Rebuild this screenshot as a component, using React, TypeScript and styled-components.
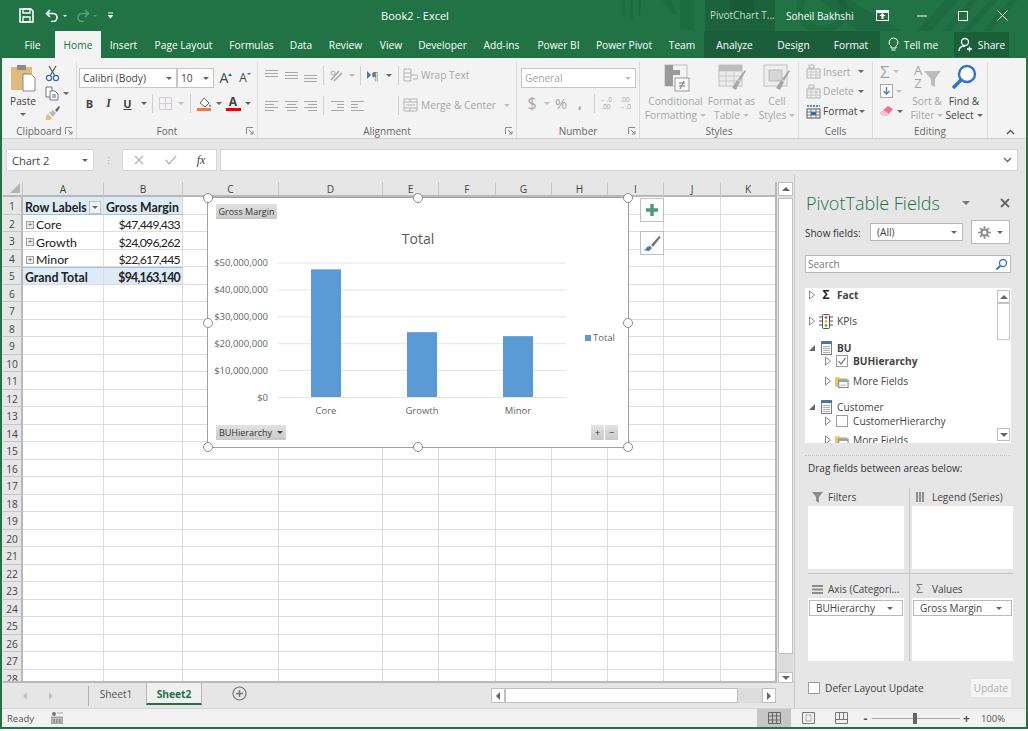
import React from "react";
import styled, { createGlobalStyle } from "styled-components";

const GREEN = "#217346";
const UI_FONT = `"Open Sans", "Noto Sans", sans-serif`;
const CELL_FONT = `Lato, "Open Sans", sans-serif`;

const GlobalStyle = createGlobalStyle`
  html, body { margin: 0; padding: 0; background: #fff; }
  * { box-sizing: border-box; }
  body { font-family: ${UI_FONT}; font-size: 10.2px; color: #444; }
`;

const Window = styled.div`
  width: 1028px;
  height: 729px;
  display: flex;
  flex-direction: column;
  border: 2px solid ${GREEN};
  border-top: 0;
  background: #e6e6e6;
  box-shadow: 0 1px 2px rgba(0, 0, 0, 0.6);
  overflow: hidden;
`;

/* title bar */
const TitleBar = styled.div`
  height: 31px;
  display: flex;
  align-items: center;
  background: ${GREEN};
  color: #fff;
  position: relative;
`;

const Backdrop = styled.svg`
  position: absolute;
  left: 598px;
  top: 0;
`;

const Qat = styled.div`
  width: 354px;
  padding-left: 17px;
  display: flex;
  align-items: center;
  position: relative;
`;

const AppTitle = styled.div`
  width: 118px;
  text-align: center;
  font-size: 11px;
  position: relative;
`;

const TitleGap = styled.div`
  width: 231px;
`;

const ContextTitle = styled.div`
  width: 70px;
  height: 31px;
  line-height: 31px;
  padding-left: 5px;
  font-size: 10px;
  white-space: nowrap;
  background: rgba(0, 0, 0, 0.14);
  color: #c5dccf;
  position: relative;
`;

const UserName = styled.div`
  width: 92px;
  padding-left: 11px;
  font-size: 10px;
  white-space: nowrap;
  position: relative;
`;

const WinButton = styled.div<{ $w: number }>`
  width: ${(p) => p.$w}px;
  display: flex;
  justify-content: center;
  align-items: center;
  position: relative;
`;

const Caret = styled.span<{ $c?: string; $ml?: number; $s?: number }>`
  display: inline-block;
  flex: none;
  width: 0;
  height: 0;
  margin-left: ${(p) => p.$ml ?? 0}px;
  border-left: ${(p) => p.$s ?? 3}px solid transparent;
  border-right: ${(p) => p.$s ?? 3}px solid transparent;
  border-top: ${(p) => p.$s ?? 3}px solid ${(p) => p.$c ?? "#666"};
`;

/* ribbon tabs */
const TabRow = styled.div`
  height: 27px;
  display: flex;
  align-items: stretch;
  background: ${GREEN};
  padding-left: 8px;
  position: relative;
`;

const Tab = styled.div<{ $w: number; $active?: boolean }>`
  width: ${(p) => p.$w}px;
  display: flex;
  align-items: center;
  justify-content: center;
  gap: 5px;
  font-size: 10.2px;
  white-space: nowrap;
  color: ${(p) => (p.$active ? GREEN : "#fff")};
  background: ${(p) => (p.$active ? "#f3f3f3" : "transparent")};
`;

const ContextTabs = styled.div`
  display: flex;
  background: #1b5e3a;
`;

const ShareTab = styled(Tab)`
  background: #1b5e3a;
  margin: 1px 0 1px 8px;
`;

/* ribbon */
const Ribbon = styled.div`
  height: 81px;
  display: flex;
  background: #f3f3f3;
  border-bottom: 1px solid #d0d0d0;
  color: #444;
  position: relative;
`;

const Group = styled.section<{ $w: number }>`
  width: ${(p) => p.$w}px;
  flex: none;
  display: flex;
  flex-direction: column;
  margin-top: 4px;
  border-right: 1px solid #dadada;
`;

const GroupBody = styled.div`
  flex: 1;
  display: flex;
  min-height: 0;
`;

const GroupFooter = styled.div`
  height: 14px;
  display: grid;
  grid-template-columns: 1fr auto 1fr;
  align-items: center;
  font-size: 10px;
  color: #666;
`;

const Launcher = styled.svg`
  justify-self: end;
  margin-right: 3px;
`;

const Collapse = styled.svg`
  margin: 71px 0 0 18px;
`;

const BigButton = styled.div<{ $w: number; $dim?: boolean }>`
  width: ${(p) => p.$w}px;
  flex: none;
  display: flex;
  flex-direction: column;
  align-items: center;
  font-size: 10.2px;
  line-height: 14px;
  color: ${(p) => (p.$dim ? "#a6a6a6" : "#444")};
  white-space: nowrap;
`;

const BigIcon = styled.div`
  height: 32px;
  padding-top: 2px;
  display: flex;
  align-items: flex-start;
  justify-content: center;
  flex: none;
`;

const Line = styled.div`
  display: flex;
  align-items: center;
  gap: 3px;
`;

const Column = styled.div<{ $w?: number; $gap?: number; $pt?: number; $pl?: number }>`
  display: flex;
  flex-direction: column;
  flex: none;
  width: ${(p) => (p.$w ? `${p.$w}px` : "auto")};
  gap: ${(p) => p.$gap ?? 0}px;
  padding-top: ${(p) => p.$pt ?? 0}px;
  padding-left: ${(p) => p.$pl ?? 0}px;
`;

const ToolRow = styled.div<{ $h?: number; $mt?: number }>`
  display: flex;
  align-items: center;
  height: ${(p) => p.$h ?? 20}px;
  margin-top: ${(p) => p.$mt ?? 0}px;
`;

const Slot = styled.div<{ $w: number }>`
  width: ${(p) => p.$w}px;
  flex: none;
  display: flex;
  align-items: center;
  justify-content: center;
`;

const RowSep = styled.span`
  width: 1px;
  height: 19px;
  background: #d0d0d0;
  flex: none;
`;

const ComboBox = styled.div<{ $w: number; $dim?: boolean }>`
  width: ${(p) => p.$w}px;
  height: 20px;
  background: #fff;
  border: 1px solid #c6c6c6;
  display: flex;
  align-items: center;
  justify-content: space-between;
  padding: 0 4px 0 3px;
  font-size: 10.2px;
  color: ${(p) => (p.$dim ? "#a6a6a6" : "#444")};
`;

const Letter = styled.span<{ $b?: boolean; $i?: boolean; $u?: boolean; $size?: number; $dim?: boolean }>`
  font-family: ${(p) => (p.$i ? `"Liberation Serif", serif` : UI_FONT)};
  font-weight: ${(p) => (p.$b ? 700 : 400)};
  font-style: ${(p) => (p.$i ? "italic" : "normal")};
  text-decoration: ${(p) => (p.$u ? "underline" : "none")};
  font-size: ${(p) => p.$size ?? 11}px;
  color: ${(p) => (p.$dim ? "#a6a6a6" : "#444")};
  line-height: 1;
`;

const CommandText = styled.span<{ $dim?: boolean }>`
  font-size: 10.2px;
  color: ${(p) => (p.$dim ? "#a6a6a6" : "#444")};
  white-space: nowrap;
`;

const Decimal = styled.span`
  font-size: 6.5px;
  line-height: 7px;
  color: #a6a6a6;
  text-align: center;
  white-space: pre;
`;

const SortLetters = styled.div`
  display: flex;
  flex-direction: column;
  width: 12px;
  align-items: center;
`;

/* formula bar */
const FormulaBar = styled.div`
  height: 36px;
  display: flex;
  align-items: flex-start;
  padding: 10px 8px 0 4px;
  background: #e6e6e6;
`;

const NameBox = styled.div`
  width: 88px;
  height: 22px;
  background: #fff;
  border: 1px solid #d6d6d6;
  display: flex;
  align-items: center;
  justify-content: space-between;
  padding: 0 5px;
  font-size: 11px;
  color: #444;
`;

const Grip = styled.div`
  width: 28px;
  height: 22px;
  display: flex;
  align-items: center;
  justify-content: center;
  color: #a8a8a8;
  font-size: 9px;
`;

const FxBox = styled.div`
  width: 95px;
  height: 22px;
  background: #fff;
  border: 1px solid #d6d6d6;
  display: grid;
  grid-template-columns: 32px 32px 28px;
  align-items: center;
  justify-items: center;
`;

const FormulaInput = styled.div`
  flex: 1;
  height: 22px;
  margin-left: 3px;
  background: #fff;
  border: 1px solid #d6d6d6;
  display: flex;
  align-items: center;
  justify-content: flex-end;
  padding-right: 5px;
`;

/* worksheet */
const Main = styled.div`
  height: 533px;
  display: flex;
`;

const SheetPane = styled.div`
  width: 793px;
  display: flex;
  flex-direction: column;
  border-right: 1px solid #c8c8c8;
`;

const GridRow = styled.div`
  height: 508px;
  display: flex;
  padding: 7px 0 0 1px;
`;

const GridWrap = styled.div`
  width: 774px;
  height: 501px;
  position: relative;
  border-bottom: 2px solid #b8b8b8;
  border-right: 2px solid #b8b8b8;
`;

const Cells = styled.div`
  height: 100%;
  display: grid;
  grid-template-columns: 20px 81px 79px 96px 104px 56px 57px 56px 56px 56px 57px 55px;
  grid-template-rows: 15px;
  grid-auto-rows: 17.5px;
  overflow: hidden;
  background: #fff;
  font-family: ${CELL_FONT};
  font-size: 12.3px;
  color: #222;
`;

const Corner = styled.div`
  background: #e6e6e6;
  border-right: 1px solid #c6c6c6;
  border-bottom: 2px solid #b8b8b8;
  display: flex;
  align-items: flex-end;
  justify-content: flex-end;
  padding: 0 2px 2px 0;
`;

const ColHead = styled.div`
  background: #e6e6e6;
  border-right: 1px solid #c6c6c6;
  border-bottom: 2px solid #b8b8b8;
  text-align: center;
  font-family: ${UI_FONT};
  font-size: 10.2px;
  line-height: 14px;
  color: #444;
`;

const RowHead = styled.div`
  background: #e6e6e6;
  border-bottom: 1px solid #c6c6c6;
  border-right: 2px solid #b8b8b8;
  text-align: center;
  font-family: ${UI_FONT};
  font-size: 10.2px;
  line-height: 19px;
  color: #444;
`;

const Cell = styled.div<{ $head?: boolean; $total?: boolean; $right?: boolean }>`
  border-right: 1px solid #dcdcdc;
  border-bottom: 1px solid #dcdcdc;
  background: ${(p) => (p.$head || p.$total ? "#ddebf7" : "#fff")};
  border-top: ${(p) => (p.$total ? "1px solid #9bc2e6" : "0")};
  border-bottom-color: ${(p) => (p.$head ? "#9bc2e6" : "#dcdcdc")};
  font-weight: ${(p) => (p.$head || p.$total ? 700 : 400)};
  letter-spacing: ${(p) => (p.$right ? "-0.75px" : "0")};
  display: flex;
  align-items: center;
  justify-content: ${(p) => (p.$right ? "flex-end" : "flex-start")};
  padding: ${(p) => (p.$total ? 3 : 4)}px 2px 0;
  white-space: nowrap;
  overflow: hidden;
  gap: 2px;
`;

const FilterButton = styled.span`
  margin-left: auto;
  width: 13px;
  height: 13px;
  background: #f2f2f2;
  border: 1px solid #c0c0c0;
  display: flex;
  align-items: center;
  justify-content: center;
`;

const Expander = styled.span`
  width: 8px;
  height: 8px;
  margin-left: 1px;
  border: 1px solid #a0a0a0;
  background: #e8eef5;
  color: #555;
  font-size: 8px;
  line-height: 6px;
  text-align: center;
  font-family: "Liberation Sans", sans-serif;
`;

/* chart, lies over the cells */
const ChartFrame = styled.div`
  position: absolute;
  left: 204px;
  top: 15px;
  width: 422px;
  height: 251px;
  background: #fff;
  border: 1px solid #a0a0a0;
`;

const PlotSvg = styled.svg`
  display: block;
  font-family: ${UI_FONT};
`;

const Handle = styled.span<{ $x: number; $y: number }>`
  position: absolute;
  left: ${(p) => p.$x}%;
  top: ${(p) => p.$y}%;
  width: 10px;
  height: 10px;
  margin: -5px 0 0 -5px;
  background: #fff;
  border: 1.5px solid #8c8c8c;
  border-radius: 50%;
`;

const FieldButton = styled.div<{ $x: number; $y: number; $w: number }>`
  position: absolute;
  left: ${(p) => p.$x}px;
  top: ${(p) => p.$y}px;
  width: ${(p) => p.$w}px;
  height: 15px;
  background: linear-gradient(#e2e2e2, #c9c9c9);
  font-size: 9px;
  line-height: 15px;
  color: #333;
  display: flex;
  align-items: center;
  justify-content: center;
  gap: 5px;
  white-space: nowrap;
`;

const SideButton = styled.div<{ $y: number }>`
  position: absolute;
  left: 432px;
  top: ${(p) => p.$y}px;
  width: 24px;
  height: 24px;
  background: #fff;
  border: 1px solid #c0c0c0;
  display: flex;
  align-items: center;
  justify-content: center;
`;

const VScroll = styled.div`
  width: 15px;
  margin-left: 1px;
  height: 501px;
  display: flex;
  flex-direction: column;
  background: #dcdcdc;
`;

const ScrollBtn = styled.div<{ $h?: number; $w?: number }>`
  width: ${(p) => (p.$w ? `${p.$w}px` : "auto")};
  height: ${(p) => (p.$h ? `${p.$h}px` : "auto")};
  background: #fff;
  border: 1px solid #c0c0c0;
  display: flex;
  align-items: center;
  justify-content: center;
  flex: none;
`;

const VThumb = styled.div`
  height: 456px;
  margin-top: 2px;
  background: #fff;
  border: 1px solid #c0c0c0;
  flex: none;
`;

const UpArrow = styled.span<{ $c?: string }>`
  width: 0;
  height: 0;
  border-left: 4px solid transparent;
  border-right: 4px solid transparent;
  border-bottom: 4px solid ${(p) => p.$c ?? "#666"};
`;

const DownArrow = styled.span`
  width: 0;
  height: 0;
  border-left: 4px solid transparent;
  border-right: 4px solid transparent;
  border-top: 4px solid #666;
`;

const SideArrow = styled.span<{ $left?: boolean; $c?: string }>`
  width: 0;
  height: 0;
  border-top: 4px solid transparent;
  border-bottom: 4px solid transparent;
  ${(p) =>
    p.$left
      ? `border-right: 4px solid ${p.$c ?? "#666"};`
      : `border-left: 4px solid ${p.$c ?? "#666"};`}
`;

/* sheet tabs */
const SheetTabs = styled.div`
  height: 25px;
  display: flex;
  align-items: flex-start;
  background: #e6e6e6;
`;

const TabNav = styled.div`
  width: 87px;
  height: 20px;
  display: flex;
  align-items: center;
  padding-left: 21px;
  gap: 22px;
  border-right: 1px solid #b0b0b0;
  margin-top: 3px;
`;

const SheetTab = styled.div<{ $active?: boolean; $w: number }>`
  width: ${(p) => p.$w}px;
  height: 22px;
  margin-left: ${(p) => (p.$active ? 5 : 2)}px;
  text-align: center;
  line-height: 22px;
  font-size: 10.2px;
  font-weight: ${(p) => (p.$active ? 700 : 400)};
  color: ${(p) => (p.$active ? GREEN : "#555")};
  background: ${(p) => (p.$active ? "#f0f0f0" : "transparent")};
  border-bottom: ${(p) => (p.$active ? `2px solid ${GREEN}` : "0")};
  border-left: ${(p) => (p.$active ? "1px solid #b8b8b8" : "0")};
  border-right: ${(p) => (p.$active ? "1px solid #b8b8b8" : "0")};
`;

const AddSheet = styled.div`
  margin: 3px 0 0 30px;
  width: 15px;
  height: 15px;
  display: flex;
`;

const HScroll = styled.div`
  margin: 5px 0 0 auto;
  margin-right: 18px;
  width: 285px;
  height: 15px;
  display: flex;
  background: #dcdcdc;
`;

const HThumb = styled.div`
  width: 233px;
  background: #fff;
  border: 1px solid #c0c0c0;
  margin-right: auto;
`;

/* field list pane */
const Panel = styled.aside`
  width: 231px;
  display: flex;
  flex-direction: column;
  padding-left: 10px;
  background: #e6e6e6;
`;

const PanelHead = styled.div`
  height: 24px;
  margin-top: 16px;
  display: flex;
  align-items: center;
`;

const PanelTitle = styled.div`
  font-size: 18px;
  font-weight: 300;
  color: ${GREEN};
  width: 157px;
  white-space: nowrap;
  padding-left: 1px;
`;

const ShowRow = styled.div`
  margin-top: 5px;
  height: 24px;
  display: flex;
  align-items: center;
`;

const ShowLabel = styled.div`
  width: 65px;
  font-size: 10px;
  color: #333;
  white-space: nowrap;
  padding-top: 1px;
`;

const ShowSelect = styled.div`
  width: 93px;
  height: 18px;
  background: #fff;
  border: 1px solid #b8b8b8;
  display: flex;
  align-items: center;
  justify-content: space-between;
  padding: 0 5px 0 6px;
  font-size: 10.2px;
`;

const GearButton = styled.div`
  width: 39px;
  height: 24px;
  margin-left: 8px;
  background: #fff;
  border: 1px solid #b8b8b8;
  display: flex;
  align-items: center;
  justify-content: center;
  gap: 6px;
`;

const SearchBox = styled.div`
  margin-top: 11px;
  width: 206px;
  height: 18px;
  background: #fff;
  border: 1px solid #b8b8b8;
  display: flex;
  align-items: center;
  justify-content: space-between;
  padding: 0 2px 0 2px;
  font-size: 10px;
  color: #777;
`;

const FieldList = styled.div`
  margin-top: 15px;
  width: 206px;
  height: 155px;
  display: flex;
  background: #fff;
  overflow: hidden;
  flex: none;
`;

const FieldRows = styled.div`
  flex: 1;
  min-width: 0;
`;

const FieldRow = styled.div<{ $mt: number; $indent?: boolean; $bold?: boolean }>`
  height: 14px;
  margin-top: ${(p) => p.$mt}px;
  padding-left: ${(p) => (p.$indent ? 19 : 3)}px;
  display: flex;
  align-items: center;
  font-size: 10.2px;
  font-weight: ${(p) => (p.$bold ? 700 : 400)};
  color: #444;
  white-space: nowrap;
`;

const Twist = styled.span`
  width: 11px;
  flex: none;
  display: flex;
`;

const FieldIcon = styled.span`
  width: 14px;
  flex: none;
  display: flex;
  justify-content: center;
  align-items: center;
  margin-right: 4px;
`;

const CheckBox = styled.span`
  width: 12px;
  height: 12px;
  flex: none;
  background: #fff;
  border: 1px solid #9c9c9c;
  display: flex;
  align-items: center;
  justify-content: center;
`;

const ListScroll = styled.div`
  width: 14px;
  flex: none;
  display: flex;
  flex-direction: column;
  padding: 2px 1px 2px 0;
  background: #fff;
`;

const ListThumb = styled.div`
  height: 37px;
  border: 1px solid #c6c6c6;
  background: #fff;
`;

const PanelDivider = styled.div`
  margin-top: 12px;
  width: 206px;
  border-top: 1px dotted #c0c0c0;
`;

const Hint = styled.div`
  margin: 5px 0 0 3px;
  font-size: 10px;
  color: #333;
  white-space: nowrap;
`;

const Areas = styled.div`
  margin: 13px 0 0 3px;
  display: grid;
  grid-template-columns: 102px 103px;
  grid-template-rows: 86px 87px;
  flex: none;
`;

const AreaCell = styled.div<{ $left?: boolean; $top?: boolean }>`
  padding-right: ${(p) => (p.$left ? 5 : 0)}px;
  padding-left: ${(p) => (p.$left ? 0 : 2)}px;
  border-right: ${(p) => (p.$left ? "1px solid #c6c6c6" : "0")};
  border-bottom: ${(p) => (p.$top ? "1px solid #c6c6c6" : "0")};
  display: flex;
  flex-direction: column;
`;

const AreaHead = styled.div<{ $top?: boolean }>`
  height: 18px;
  margin-top: ${(p) => (p.$top ? 0 : 6)}px;
  display: flex;
  align-items: center;
  padding-left: 4px;
  font-size: 10px;
  color: #444;
  white-space: nowrap;
`;

const AreaIcon = styled.span`
  width: 12px;
  flex: none;
  display: flex;
  margin-right: 4px;
`;

const AreaBox = styled.div`
  height: 63px;
  background: #fff;
  padding: 2px 1px;
`;

const AreaItem = styled.div`
  height: 16px;
  background: #fff;
  border: 1px solid #b8b8b8;
  display: flex;
  align-items: center;
  justify-content: space-between;
  padding: 0 9px 0 6px;
  font-size: 10px;
  color: #444;
`;

const PanelFooter = styled.div`
  margin: 18px 0 0 3px;
  width: 203px;
  display: flex;
  align-items: center;
`;

const DeferLabel = styled.span`
  margin-left: 5px;
  font-size: 10.2px;
  color: #444;
  white-space: nowrap;
`;

const UpdateButton = styled.div`
  margin-left: auto;
  width: 40px;
  height: 18px;
  background: #f4f4f4;
  color: #b0b0b0;
  font-size: 10px;
  line-height: 18px;
  text-align: center;
`;

/* status bar */
const StatusBar = styled.div`
  height: 19px;
  display: flex;
  align-items: center;
  background: #f1f1f1;
  border-top: 1px solid #d6d6d6;
  color: #555;
  font-size: 9.5px;
`;

const ReadyText = styled.span`
  width: 47px;
  padding-left: 5px;
`;

const NormalView = styled.div`
  margin-left: auto;
  width: 34px;
  height: 18px;
  background: #c6c6c6;
  display: flex;
  align-items: center;
  justify-content: center;
`;

const ZoomTrack = styled.div`
  width: 88px;
  height: 1px;
  margin: 0 3px;
  background: #a8a8a8;
  display: flex;
  align-items: center;
  padding-left: 41px;
`;

const ZoomThumb = styled.span`
  width: 4px;
  height: 11px;
  background: #666;
  flex: none;
`;

const ZoomSign = styled.span<{ $ml?: number }>`
  width: 7px;
  margin-left: ${(p) => p.$ml ?? 0}px;
  text-align: center;
  font-size: 12px;
  font-weight: 700;
  color: #555;
`;

const ZoomPct = styled.span`
  width: 46px;
  margin-right: 10px;
  text-align: center;
`;

/* drawings */
const PaintBrush = () => (
  <svg width="18" height="18" viewBox="0 0 18 18">
    <path d="M4 10l4 4-2 2-5 0 1-1 0-3z" fill="#e0bd84" />
    <path d="M5 9l4-3 3 3-3 4z" fill="#b8b8b8" />
    <path d="M11 6l4-4 1 1-3 5z" fill="#606060" />
  </svg>
);

const TableMark = ({ brush }: { brush?: boolean }) => (
  <svg width="30" height="28" viewBox="0 0 30 28">
    <rect x="2" y="1" width="23" height="21" fill="#ececec" stroke="#c0c0c0" />
    <path d="M2 7h23M2 12h23M2 17h23M9 1v21M17 1v21" stroke="#c8c8c8" fill="none" />
    <rect x="2" y="1" width="23" height="6" fill="#bdbdbd" />
    {brush && <path d="M15 24l5-8 3 2-4 8zM21 15l7-9 1 1-6 10z" fill="#a8a8a8" />}
  </svg>
);

const SmallGrid = ({ blue }: { blue?: boolean }) => (
  <svg width="15" height="15" viewBox="0 0 15 15">
    <rect x="1" y="5" width="13" height="9" fill={blue ? "#fff" : "none"} stroke={blue ? "#555" : "#b4b4b4"} />
    <path d="M1 8h13M1 11h13M5 5v9M10 5v9" stroke={blue ? "#777" : "#c4c4c4"} fill="none" />
    {blue ? (
      <>
        <path d="M1 2h13" stroke="#2f6eb5" strokeDasharray="2 1" strokeWidth="1.5" />
        <rect x="5" y="8" width="5" height="3" fill="#2f6eb5" />
      </>
    ) : (
      <path d="M3 1h5v3H3z" fill="none" stroke="#b4b4b4" />
    )}
  </svg>
);

const LinesIcon = ({ rows, dim = "#a8a8a8" }: { rows: [number, number, number][]; dim?: string }) => (
  <svg width="15" height="13" viewBox="0 0 15 13">
    {rows.map(([x1, x2, y]) => (
      <path key={`${x1}-${y}`} d={`M${x1} ${y + 0.5}H${x2}`} stroke={dim} />
    ))}
  </svg>
);

const Launch = () => (
  <Launcher width="8" height="8" viewBox="0 0 8 8">
    <path d="M0.5 7V0.5H7" fill="none" stroke="#8a8a8a" />
    <path d="M3 3l4 4M7 4v3H4" fill="none" stroke="#8a8a8a" />
  </Launcher>
);

const MoreFolder = () => (
  <svg width="15" height="13" viewBox="0 0 15 13">
    <path d="M0 2h5l1 1h7v9H0z" fill="#ecc56f" />
    <rect x="4" y="5" width="10" height="8" fill="#fff" stroke="#777" />
    <path d="M4 5h10v2H4z" fill="#8aa3bd" />
    <path d="M6 10.5h6" stroke="#555" strokeDasharray="1 1" />
  </svg>
);

const TableField = () => (
  <svg width="11" height="14" viewBox="0 0 11 14">
    <rect x="0.5" y="0.5" width="10" height="13" fill="#fff" stroke="#7d7d7d" />
    <rect x="0.5" y="0.5" width="10" height="2.5" fill="#3d75b4" />
    <path d="M2 5.5h7M2 7.5h7M2 9.5h7M2 11.5h7" stroke="#b0b0b0" />
  </svg>
);

const TwistOpen = () => (
  <svg width="8" height="8" viewBox="0 0 8 8">
    <path d="M7 1v6H1z" fill="#666" />
  </svg>
);

const TwistClosed = () => (
  <svg width="8" height="10" viewBox="0 0 8 10">
    <path d="M1.5 1l5 4-5 4z" fill="#fff" stroke="#888" />
  </svg>
);

/* data */
const COLUMNS = ["A", "B", "C", "D", "E", "F", "G", "H", "I", "J", "K"];
const ROW_COUNT = 28;
const PIVOT: Record<number, string[]> = {
  2: ["Core", "$47,449,433"],
  3: ["Growth", "$24,096,262"],
  4: ["Minor", "$22,617,445"],
};

const TABS = [
  { label: "File", w: 45 },
  { label: "Home", w: 46, active: true },
  { label: "Insert", w: 45 },
  { label: "Page Layout", w: 75 },
  { label: "Formulas", w: 61 },
  { label: "Data", w: 38 },
  { label: "Review", w: 51 },
  { label: "View", w: 40 },
  { label: "Developer", w: 63 },
  { label: "Add-ins", w: 55 },
  { label: "Power BI", w: 59 },
  { label: "Power Pivot", w: 72 },
  { label: "Team", w: 44 },
];

const BARS = [
  { label: "Core", value: 47449433, x: 103 },
  { label: "Growth", value: 24096262, x: 199 },
  { label: "Minor", value: 22617445, x: 295 },
];
const AXIS = [50, 40, 30, 20, 10, 0];
const PLOT_BOTTOM = 199;
const PLOT_PER_TEN_M = 26.9;

const HANDLES: [number, number][] = [
  [0, 0], [50, 0], [100, 0], [0, 50], [100, 50], [0, 100], [50, 100], [100, 100],
];

const Chart = () => (
  <ChartFrame>
    <PlotSvg width="420" height="249" viewBox="0 0 420 249">
      {AXIS.map((tick) => {
        const y = PLOT_BOTTOM - (tick / 10) * PLOT_PER_TEN_M;
        return (
          <g key={tick}>
            <path d={`M70 ${y + 0.5}H358`} stroke="#e4e4e4" />
            <text x="60" y={y + 3.5} fontSize="9.5" textAnchor="end" fill="#666">
              {tick === 0 ? "$0" : `$${tick},000,000`}
            </text>
          </g>
        );
      })}
      {BARS.map((bar) => {
        const h = (bar.value / 1e7) * PLOT_PER_TEN_M;
        return (
          <g key={bar.label}>
            <rect x={bar.x} y={PLOT_BOTTOM - h} width="30" height={h} fill="#5b9bd5" />
            <text x={bar.x + 15} y="216" fontSize="9.5" textAnchor="middle" fill="#666">
              {bar.label}
            </text>
          </g>
        );
      })}
      <text x="210" y="46" fontSize="14" textAnchor="middle" fill="#595959">
        Total
      </text>
      <rect x="377" y="137" width="6" height="6" fill="#5b9bd5" />
      <text x="385" y="143" fontSize="9.5" fill="#666">
        Total
      </text>
    </PlotSvg>
    <FieldButton $x={8} $y={6} $w={61}>Gross Margin</FieldButton>
    <FieldButton $x={8} $y={227} $w={70}>
      BUHierarchy <Caret $c="#444" />
    </FieldButton>
    <FieldButton $x={383} $y={227} $w={13}>+</FieldButton>
    <FieldButton $x={397} $y={227} $w={13}>−</FieldButton>
    {HANDLES.map(([x, y]) => (
      <Handle key={`${x}-${y}`} $x={x} $y={y} />
    ))}
    <SideButton $y={0}>
      <svg width="14" height="14" viewBox="0 0 14 14">
        <path d="M7 1v12M1 7h12" stroke="#4e9a78" strokeWidth="3.5" />
      </svg>
    </SideButton>
    <SideButton $y={33}>
      <svg width="20" height="18" viewBox="0 0 20 18">
        <path d="M1 16c2 0 3-1 4-3l3-1 2 2-3 3z" fill="#3f78b8" />
        <path d="M9 11l8-9 2 1-8 10z" fill="#7a7a7a" />
      </svg>
    </SideButton>
  </ChartFrame>
);

const Sheet = () => (
  <GridWrap>
    <Cells>
      <Corner>
        <svg width="10" height="10" viewBox="0 0 10 10">
          <path d="M10 0v10H0z" fill="#b4b4b4" />
        </svg>
      </Corner>
      {COLUMNS.map((c) => (
        <ColHead key={c}>{c}</ColHead>
      ))}
      {Array.from({ length: ROW_COUNT }, (_, i) => i + 1).map((row) => (
        <React.Fragment key={row}>
          <RowHead>{row}</RowHead>
          {COLUMNS.map((c) => {
            if (row === 1 && c === "A")
              return (
                <Cell key={c} $head>
                  Row Labels
                  <FilterButton>
                    <Caret $c="#666" />
                  </FilterButton>
                </Cell>
              );
            if (row === 1 && c === "B")
              return <Cell key={c} $head>Gross Margin</Cell>;
            if (PIVOT[row] && c === "A")
              return (
                <Cell key={c}>
                  <Expander>+</Expander>
                  {PIVOT[row][0]}
                </Cell>
              );
            if (PIVOT[row] && c === "B")
              return <Cell key={c} $right>{PIVOT[row][1]}</Cell>;
            if (row === 5 && c === "A")
              return <Cell key={c} $total>Grand Total</Cell>;
            if (row === 5 && c === "B")
              return <Cell key={c} $total $right>$94,163,140</Cell>;
            return <Cell key={c} />;
          })}
        </React.Fragment>
      ))}
    </Cells>
    <Chart />
  </GridWrap>
);

const Title = () => (
  <TitleBar>
    <Backdrop width="428" height="31" viewBox="0 0 428 31">
      <g fill="rgba(0,0,0,0.07)">
        <path d="M22 0h3v15h-3zM30 0h3v19h-3zM38 0h3v15h-3z" />
        <path d="M62 0h8l8 14h-6zM80 0h14v30h-14z" />
        <path d="M130 0h24v20h-24z" />
        <path d="M250 0l52 31h-44l-38-31z" />
        <path d="M345 0h14l-28 31h-14zM370 0h8l-28 31h-8zM390 0h8l-28 31h-8zM410 0h8l-28 31h-8z" />
      </g>
      <circle cx="222" cy="8" r="22" fill="none" stroke="rgba(0,0,0,0.07)" strokeWidth="8" />
    </Backdrop>
    <Qat>
      <svg width="15" height="15" viewBox="0 0 15 15">
        <path d="M1 1h11l2 2v11H1z" fill="none" stroke="#fff" strokeWidth="1.6" />
        <path d="M4 1h7v4H4zM4 9h7v5H4z" fill="none" stroke="#fff" strokeWidth="1.3" />
      </svg>
      <Slot $w={11} />
      <svg width="14" height="13" viewBox="0 0 14 13">
        <path d="M5 1L1.5 4.5 5 8M2 4.5h6a4 4 0 0 1 0 8H6" fill="none" stroke="#fff" strokeWidth="1.6" />
      </svg>
      <Slot $w={4} />
      <Caret $c="#fff" $s={2.5} />
      <Slot $w={9} />
      <svg width="14" height="13" viewBox="0 0 14 13">
        <path d="M9 1l3.5 3.5L9 8M12 4.5H6a4 4 0 0 0 0 8h2" fill="none" stroke="#5f9a7a" strokeWidth="1.6" />
      </svg>
      <Slot $w={3} />
      <Caret $c="#5f9a7a" $s={2.5} />
      <Slot $w={10} />
      <svg width="7" height="7" viewBox="0 0 7 7">
        <path d="M1 1h5" stroke="#fff" />
        <path d="M0.5 3h6L3.5 6.5z" fill="#fff" />
      </svg>
    </Qat>
    <AppTitle>Book2 - Excel</AppTitle>
    <TitleGap />
    <ContextTitle>PivotChart T...</ContextTitle>
    <UserName>Soheil Bakhshi</UserName>
    <WinButton $w={30}>
      <svg width="13" height="11" viewBox="0 0 13 11">
        <rect x="0.5" y="0.5" width="12" height="10" fill="none" stroke="#fff" />
        <path d="M0 2h13" stroke="#fff" strokeWidth="2" />
        <path d="M6.5 3l3 3h-2v3h-2V6h-2z" fill="#fff" />
      </svg>
    </WinButton>
    <WinButton $w={50}>
      <svg width="10" height="10" viewBox="0 0 10 10">
        <path d="M0 5h10" stroke="#fff" />
      </svg>
    </WinButton>
    <WinButton $w={32}>
      <svg width="10" height="10" viewBox="0 0 10 10">
        <rect x="0.5" y="0.5" width="9" height="9" fill="none" stroke="#fff" />
      </svg>
    </WinButton>
    <WinButton $w={47}>
      <svg width="11" height="11" viewBox="0 0 11 11">
        <path d="M0.5 0.5l10 10M10.5 0.5l-10 10" stroke="#fff" />
      </svg>
    </WinButton>
  </TitleBar>
);

const Tabs = () => (
  <TabRow>
    {TABS.map((t) => (
      <Tab key={t.label} $w={t.w} $active={t.active}>
        {t.label}
      </Tab>
    ))}
    <ContextTabs>
      <Tab $w={61}>Analyze</Tab>
      <Tab $w={57}>Design</Tab>
      <Tab $w={58}>Format</Tab>
    </ContextTabs>
    <Tab $w={66}>
      <svg width="11" height="15" viewBox="0 0 11 15">
        <path d="M5.5 1a4.5 4.5 0 0 0-2.5 8.2V11h5V9.2A4.5 4.5 0 0 0 5.5 1zM3.5 13h4" fill="none" stroke="#fff" />
      </svg>
      Tell me
    </Tab>
    <ShareTab $w={55}>
      <svg width="15" height="15" viewBox="0 0 15 15">
        <circle cx="7" cy="5" r="3.5" fill="none" stroke="#fff" strokeWidth="1.3" />
        <path d="M1 14c0-3 2-5 6-5M9 12h5M11.5 9.5v5" fill="none" stroke="#fff" strokeWidth="1.3" />
      </svg>
      Share
    </ShareTab>
  </TabRow>
);

const RibbonBar = () => (
  <Ribbon>
    <Group $w={75}>
      <GroupBody>
        <BigButton $w={42}>
          <BigIcon>
            <svg width="27" height="28" viewBox="0 0 27 28">
              <rect x="1" y="3" width="21" height="23" rx="1" fill="#dfba7f" />
              <rect x="7" y="1" width="9" height="5" fill="#8a8a8a" />
              <path d="M13 10h8l4 4v13H13z" fill="#fff" stroke="#8a8a8a" />
            </svg>
          </BigIcon>
          Paste
          <Caret $c="#666" style={{ marginTop: 5 }} />
        </BigButton>
        <Column $w={26} $pt={1}>
          <ToolRow $h={20}>
            <svg width="15" height="17" viewBox="0 0 15 17" style={{ marginLeft: 1 }}>
              <path d="M4 1l6 10M11 1L5 11" stroke="#555" strokeWidth="1.2" />
              <circle cx="4" cy="13" r="2.6" fill="none" stroke="#2f6eb5" strokeWidth="1.2" />
              <circle cx="11" cy="13" r="2.6" fill="none" stroke="#2f6eb5" strokeWidth="1.2" />
            </svg>
          </ToolRow>
          <ToolRow $h={20}>
            <svg width="14" height="15" viewBox="0 0 14 15" style={{ marginLeft: 1 }}>
              <path d="M1 1h6v10H1z" fill="#fff" stroke="#777" />
              <path d="M5 5h5l3 3v6H5z" fill="#fff" stroke="#777" />
              <path d="M7 9h4M7 11h4" stroke="#2f6eb5" />
            </svg>
            <Caret $ml={4} />
          </ToolRow>
          <ToolRow $h={20}>
            <PaintBrush />
          </ToolRow>
        </Column>
      </GroupBody>
      <GroupFooter>
        <span />
        Clipboard
        <Launch />
      </GroupFooter>
    </Group>

    <Group $w={181}>
      <GroupBody>
        <Column $pt={6} $pl={2}>
          <ToolRow>
            <ComboBox $w={98}>
              Calibri (Body)
              <Caret />
            </ComboBox>
            <ComboBox $w={37}>
              10
              <Caret />
            </ComboBox>
            <Slot $w={24}>
              <Letter $size={14}>A</Letter>
              <UpArrow $c="#2f6eb5" style={{ borderWidth: "0 2px 3px", marginBottom: 8 }} />
            </Slot>
            <Slot $w={14}>
              <Letter $size={12}>A</Letter>
              <Caret $c="#2f6eb5" $s={2} style={{ marginBottom: 8 }} />
            </Slot>
          </ToolRow>
          <ToolRow $mt={5}>
            <Slot $w={19} style={{ marginLeft: 1 }}>
              <Letter $b>B</Letter>
            </Slot>
            <Slot $w={19}>
              <Letter $i $b $size={12}>I</Letter>
            </Slot>
            <Slot $w={19}>
              <Letter $u $b>U</Letter>
            </Slot>
            <Slot $w={13}>
              <Caret />
            </Slot>
            <Slot $w={2} />
            <RowSep />
            <Slot $w={24}>
              <svg width="13" height="13" viewBox="0 0 13 13">
                <path d="M0.5 0.5h12v12H0.5zM6.5 0.5v12M0.5 6.5h12" fill="none" stroke="#d8c8d8" />
              </svg>
            </Slot>
            <Slot $w={8}>
              <Caret $c="#c0c0c0" />
            </Slot>
            <Slot $w={5} />
            <RowSep />
            <Slot $w={26}>
              <svg width="15" height="15" viewBox="0 0 15 15">
                <path d="M3 7l4-5 5 5-4 4z" fill="#fff" stroke="#666" />
                <path d="M13 8c1 2 1 3 0 3s-1-1 0-3z" fill="#2f6eb5" />
                <rect y="12" width="14" height="3" fill="#ed7d31" />
              </svg>
            </Slot>
            <Slot $w={4}>
              <Caret />
            </Slot>
            <Slot $w={24}>
              <Column style={{ alignItems: "center", height: 15, width: 15 }}>
                <Letter $b $size={12}>A</Letter>
                <svg width="15" height="3" viewBox="0 0 15 3">
                  <rect width="15" height="3" fill="#f00000" />
                </svg>
              </Column>
            </Slot>
            <Slot $w={6}>
              <Caret />
            </Slot>
          </ToolRow>
        </Column>
      </GroupBody>
      <GroupFooter>
        <span />
        Font
        <Launch />
      </GroupFooter>
    </Group>

    <Group $w={259}>
      <GroupBody>
        <Column $pt={3} $pl={3}>
          <ToolRow>
            <Slot $w={20}>
              <LinesIcon rows={[[1, 14, 1], [1, 14, 4], [1, 14, 7]]} />
            </Slot>
            <Slot $w={20}>
              <LinesIcon rows={[[1, 14, 3], [1, 14, 6], [1, 14, 9]]} />
            </Slot>
            <Slot $w={19}>
              <LinesIcon rows={[[1, 14, 6], [1, 14, 9], [1, 14, 12]]} />
            </Slot>
            <Slot $w={3} />
            <RowSep />
            <Slot $w={24}>
              <svg width="15" height="15" viewBox="0 0 15 15">
                <path d="M2 12L10 3M5 13L13 5" stroke="#a8a8a8" strokeWidth="1.5" />
                <circle cx="4" cy="5" r="2" fill="none" stroke="#a8a8a8" />
              </svg>
            </Slot>
            <Slot $w={8}>
              <Caret $c="#b8b8b8" />
            </Slot>
            <Slot $w={4} />
            <RowSep />
            <Slot $w={24}>
              <SideArrow $c="#3f78b8" />
              <Letter $size={11} $dim style={{ color: "#777" }}>¶</Letter>
            </Slot>
            <Slot $w={7}>
              <Caret />
            </Slot>
            <Slot $w={6} />
            <RowSep />
            <Slot $w={22}>
              <svg width="15" height="14" viewBox="0 0 15 14">
                <path d="M1 1h7v12H1zM1 5h7M1 9h7M8 7h5a1 1 0 0 1 0 4h-3" fill="none" stroke="#b4b4b4" />
              </svg>
            </Slot>
            <CommandText $dim>Wrap Text</CommandText>
          </ToolRow>
          <ToolRow $mt={10}>
            <Slot $w={20}>
              <LinesIcon rows={[[1, 14, 2], [1, 10, 5], [1, 14, 8], [1, 10, 11]]} />
            </Slot>
            <Slot $w={20}>
              <LinesIcon rows={[[1, 14, 2], [3, 12, 5], [1, 14, 8], [3, 12, 11]]} />
            </Slot>
            <Slot $w={19}>
              <LinesIcon rows={[[1, 14, 2], [5, 14, 5], [1, 14, 8], [5, 14, 11]]} />
            </Slot>
            <Slot $w={3} />
            <RowSep />
            <Slot $w={3} />
            <Slot $w={20}>
              <LinesIcon rows={[[1, 14, 2], [7, 14, 5], [7, 14, 8], [1, 14, 11]]} />
            </Slot>
            <Slot $w={20}>
              <LinesIcon rows={[[1, 14, 2], [1, 8, 5], [1, 8, 8], [1, 14, 11]]} />
            </Slot>
            <Slot $w={31} />
            <RowSep />
            <Slot $w={22}>
              <svg width="15" height="14" viewBox="0 0 15 14">
                <path d="M1 1h13v12H1zM1 4h13M1 10h13M7 1v3M7 10v3" fill="none" stroke="#b4b4b4" />
                <path d="M3 7h9" stroke="#b4b4b4" />
              </svg>
            </Slot>
            <CommandText $dim>Merge &amp; Center</CommandText>
            <Caret $c="#c0c0c0" $ml={8} />
          </ToolRow>
        </Column>
      </GroupBody>
      <GroupFooter>
        <span />
        Alignment
        <Launch />
      </GroupFooter>
    </Group>

    <Group $w={123}>
      <GroupBody>
        <Column $pt={6} $pl={4}>
          <ToolRow>
            <ComboBox $w={115} $dim>
              General
              <Caret $c="#c0c0c0" />
            </ComboBox>
          </ToolRow>
          <ToolRow $mt={5}>
            <Slot $w={22}>
              <Letter $size={16} $dim>$</Letter>
            </Slot>
            <Slot $w={8}>
              <Caret $c="#c0c0c0" />
            </Slot>
            <Slot $w={20}>
              <Letter $size={15} $dim>%</Letter>
            </Slot>
            <Slot $w={18}>
              <Letter $size={14} $b $dim>,</Letter>
            </Slot>
            <Slot $w={5} />
            <RowSep />
            <Slot $w={22}>
              <Decimal>{"←.0\n.00"}</Decimal>
            </Slot>
            <Slot $w={16}>
              <Decimal>{".00\n→.0"}</Decimal>
            </Slot>
          </ToolRow>
        </Column>
      </GroupBody>
      <GroupFooter>
        <span />
        Number
        <Launch />
      </GroupFooter>
    </Group>

    <Group $w={159}>
      <GroupBody>
        <BigButton $w={71} $dim>
          <BigIcon>
            <svg width="28" height="28" viewBox="0 0 28 28">
              <rect x="3" y="1" width="22" height="21" fill="#f3f3f3" stroke="#c0c0c0" />
              <path d="M3 1h8v21H3zM11 6h7v5h-7z" fill="#9a9a9a" />
              <rect x="13" y="14" width="14" height="13" fill="#f8f8f8" stroke="#9a9a9a" />
              <path d="M17 19h6M17 22h6M22 17l-4 8" stroke="#777" />
            </svg>
          </BigIcon>
          Conditional
          <Line>
            Formatting
            <Caret $c="#c0c0c0" />
          </Line>
        </BigButton>
        <BigButton $w={41} $dim>
          <BigIcon>
            <TableMark brush />
          </BigIcon>
          Format as
          <Line>
            Table
            <Caret $c="#c0c0c0" />
          </Line>
        </BigButton>
        <BigButton $w={50} $dim>
          <BigIcon>
            <svg width="28" height="28" viewBox="0 0 28 28">
              <rect x="1" y="1" width="23" height="21" fill="#eee" stroke="#c0c0c0" />
              <rect x="6" y="6" width="13" height="11" fill="#d6d6d6" stroke="#bbb" />
              <path d="M13 24l5-8 3 2-4 8zM19 15l7-9 1 1-6 10z" fill="#a8a8a8" />
            </svg>
          </BigIcon>
          Cell
          <Line>
            Styles
            <Caret $c="#c0c0c0" />
          </Line>
        </BigButton>
      </GroupBody>
      <GroupFooter>
        <span />
        Styles
        <span />
      </GroupFooter>
    </Group>

    <Group $w={74}>
      <GroupBody>
        <Column $pl={7}>
          <ToolRow $h={19}>
            <SmallGrid />
            <CommandText $dim style={{ marginLeft: 2, width: 35 }}>Insert</CommandText>
            <Caret />
          </ToolRow>
          <ToolRow>
            <SmallGrid />
            <CommandText $dim style={{ marginLeft: 2, width: 35 }}>Delete</CommandText>
            <Caret />
          </ToolRow>
          <ToolRow>
            <SmallGrid blue />
            <CommandText style={{ marginLeft: 2, marginRight: 2 }}>Format</CommandText>
            <Caret />
          </ToolRow>
        </Column>
      </GroupBody>
      <GroupFooter>
        <span />
        Cells
        <span />
      </GroupFooter>
    </Group>

    <Group $w={115}>
      <GroupBody>
        <Column $w={32} $pl={7}>
          <ToolRow $h={19}>
            <Letter $size={17} $dim>Σ</Letter>
            <Caret $c="#c0c0c0" $ml={3} />
          </ToolRow>
          <ToolRow>
            <svg width="13" height="14" viewBox="0 0 13 14">
              <rect x="0.5" y="0.5" width="12" height="13" fill="#fff" stroke="#a8a8a8" />
              <path d="M6.5 3v7M3.5 7l3 3 3-3" fill="none" stroke="#4a7fbc" strokeWidth="1.4" />
            </svg>
            <Caret $c="#c0c0c0" $ml={3} />
          </ToolRow>
          <ToolRow>
            <svg width="13" height="12" viewBox="0 0 13 12">
              <path d="M8 1l5 3-6 7H3L0 8z" fill="#ee6f8e" />
              <path d="M0 8l3 3h4l2-2-5-4z" fill="#f8c3cf" />
            </svg>
            <Caret $ml={4} />
          </ToolRow>
        </Column>
        <BigButton $w={44} $dim>
          <BigIcon>
            <SortLetters>
              <Letter $size={13} $dim>A</Letter>
              <Letter $size={13} $dim>Z</Letter>
            </SortLetters>
            <svg width="18" height="26" viewBox="0 0 18 26">
              <path d="M0 7h17l-6 8v8l-4-2v-6z" fill="#bcbcbc" />
            </svg>
          </BigIcon>
          Sort &amp;
          <Line>
            Filter
            <Caret $c="#c0c0c0" />
          </Line>
        </BigButton>
        <BigButton $w={30}>
          <BigIcon>
            <svg width="27" height="27" viewBox="0 0 27 27">
              <circle cx="16" cy="10" r="8" fill="#fff" stroke="#2f76c4" strokeWidth="2.4" />
              <path d="M10 16l-8 8" stroke="#2f76c4" strokeWidth="3.5" />
            </svg>
          </BigIcon>
          Find &amp;
          <Line>
            Select
            <Caret />
          </Line>
        </BigButton>
      </GroupBody>
      <GroupFooter>
        <span />
        Editing
        <span />
      </GroupFooter>
    </Group>

    <Collapse width="9" height="6" viewBox="0 0 9 6">
      <path d="M1 5l3.5-3.5L8 5" fill="none" stroke="#555" strokeWidth="1.4" />
    </Collapse>
  </Ribbon>
);

const Formula = () => (
  <FormulaBar>
    <NameBox>
      Chart 2
      <Caret />
    </NameBox>
    <Grip>⋮</Grip>
    <FxBox>
      <svg width="10" height="10" viewBox="0 0 10 10">
        <path d="M1 1l8 8M9 1L1 9" stroke="#b4b4b4" strokeWidth="1.3" />
      </svg>
      <svg width="12" height="10" viewBox="0 0 12 10">
        <path d="M1 5l3 4 7-8" fill="none" stroke="#b4b4b4" strokeWidth="1.3" />
      </svg>
      <Letter $i $size={12}>fx</Letter>
    </FxBox>
    <FormulaInput>
      <svg width="9" height="6" viewBox="0 0 9 6">
        <path d="M1 1l3.5 3.5L8 1" fill="none" stroke="#666" strokeWidth="1.3" />
      </svg>
    </FormulaInput>
  </FormulaBar>
);

const SheetFooter = () => (
  <SheetTabs>
    <TabNav>
      <SideArrow $left $c="#c4c4c4" />
      <SideArrow $c="#c4c4c4" />
    </TabNav>
    <SheetTab $w={50}>Sheet1</SheetTab>
    <SheetTab $w={56} $active>Sheet2</SheetTab>
    <AddSheet>
      <svg width="15" height="15" viewBox="0 0 15 15">
        <circle cx="7.5" cy="7.5" r="6.5" fill="none" stroke="#777" strokeWidth="1.2" />
        <path d="M7.5 4v7M4 7.5h7" stroke="#777" strokeWidth="1.5" />
      </svg>
    </AddSheet>
    <HScroll>
      <ScrollBtn $w={14}>
        <SideArrow $left />
      </ScrollBtn>
      <HThumb />
      <ScrollBtn $w={14}>
        <SideArrow />
      </ScrollBtn>
    </HScroll>
  </SheetTabs>
);

const FieldPanel = () => (
  <Panel>
    <PanelHead>
      <PanelTitle>PivotTable Fields</PanelTitle>
      <Caret $c="#777" $s={4} />
      <svg width="10" height="10" viewBox="0 0 10 10" style={{ marginLeft: 30 }}>
        <path d="M1 1l8 8M9 1L1 9" stroke="#666" strokeWidth="1.8" />
      </svg>
    </PanelHead>
    <ShowRow>
      <ShowLabel>Show fields:</ShowLabel>
      <ShowSelect>
        (All)
        <Caret />
      </ShowSelect>
      <GearButton>
        <svg width="13" height="13" viewBox="0 0 13 13">
          <circle cx="6.5" cy="6.5" r="3.2" fill="none" stroke="#8c8c8c" strokeWidth="2.2" />
          <path
            d="M6.5 0v2.5M6.5 10.5V13M0 6.5h2.5M10.5 6.5H13M2 2l1.8 1.8M9.2 9.2L11 11M11 2L9.2 3.8M3.8 9.2L2 11"
            stroke="#8c8c8c"
            strokeWidth="1.6"
          />
        </svg>
        <Caret />
      </GearButton>
    </ShowRow>
    <SearchBox>
      Search
      <svg width="13" height="13" viewBox="0 0 13 13">
        <circle cx="8" cy="5" r="3.5" fill="none" stroke="#2f76c4" strokeWidth="1.3" />
        <path d="M5.5 7.5L1.5 11.5" stroke="#2f76c4" strokeWidth="2" />
      </svg>
    </SearchBox>
    <FieldList>
      <FieldRows>
        <FieldRow $mt={0} $bold>
          <Twist><TwistClosed /></Twist>
          <FieldIcon>
            <Letter $b $size={12} style={{ color: "#222" }}>Σ</Letter>
          </FieldIcon>
          Fact
        </FieldRow>
        <FieldRow $mt={12}>
          <Twist><TwistClosed /></Twist>
          <FieldIcon>
            <svg width="14" height="15" viewBox="0 0 14 15">
              <rect x="3.5" y="0.5" width="7" height="14" rx="1" fill="#fff" stroke="#555" />
              <path d="M3 3H0M3 7H0M3 11H0M11 3h3M11 7h3M11 11h3" stroke="#555" />
              <circle cx="7" cy="3.5" r="1.4" fill="#d9534f" />
              <circle cx="7" cy="7.5" r="1.4" fill="#e8b33f" />
              <circle cx="7" cy="11.5" r="1.4" fill="#5bae5b" />
            </svg>
          </FieldIcon>
          KPIs
        </FieldRow>
        <FieldRow $mt={13} $bold>
          <Twist><TwistOpen /></Twist>
          <FieldIcon><TableField /></FieldIcon>
          BU
        </FieldRow>
        <FieldRow $mt={-1} $indent $bold>
          <Twist><TwistClosed /></Twist>
          <FieldIcon>
            <CheckBox>
              <svg width="10" height="10" viewBox="0 0 10 10">
                <path d="M1.5 5l2.5 3 4.5-6" fill="none" stroke="#666" strokeWidth="1.1" />
              </svg>
            </CheckBox>
          </FieldIcon>
          BUHierarchy
        </FieldRow>
        <FieldRow $mt={6} $indent>
          <Twist><TwistClosed /></Twist>
          <FieldIcon><MoreFolder /></FieldIcon>
          More Fields
        </FieldRow>
        <FieldRow $mt={12}>
          <Twist><TwistOpen /></Twist>
          <FieldIcon><TableField /></FieldIcon>
          Customer
        </FieldRow>
        <FieldRow $mt={0} $indent>
          <Twist><TwistClosed /></Twist>
          <FieldIcon><CheckBox /></FieldIcon>
          CustomerHierarchy
        </FieldRow>
        <FieldRow $mt={5} $indent>
          <Twist><TwistClosed /></Twist>
          <FieldIcon><MoreFolder /></FieldIcon>
          More Fields
        </FieldRow>
      </FieldRows>
      <ListScroll>
        <ScrollBtn $h={13}>
          <UpArrow />
        </ScrollBtn>
        <ListThumb />
        <ScrollBtn $h={13} style={{ marginTop: "auto" }}>
          <DownArrow />
        </ScrollBtn>
      </ListScroll>
    </FieldList>
    <PanelDivider />
    <Hint>Drag fields between areas below:</Hint>
    <Areas>
      <AreaCell $left $top>
        <AreaHead $top>
          <AreaIcon>
            <svg width="11" height="11" viewBox="0 0 11 11">
              <path d="M0 0h11L7 5v6L4 9V5z" fill="#8c8c8c" />
            </svg>
          </AreaIcon>
          Filters
        </AreaHead>
        <AreaBox />
      </AreaCell>
      <AreaCell $top>
        <AreaHead $top>
          <AreaIcon>
            <svg width="11" height="10" viewBox="0 0 11 10">
              <path d="M1 0v10M4 0v10M7 0v10" stroke="#8c8c8c" strokeWidth="2" />
            </svg>
          </AreaIcon>
          Legend (Series)
        </AreaHead>
        <AreaBox />
      </AreaCell>
      <AreaCell $left>
        <AreaHead>
          <AreaIcon>
            <svg width="11" height="9" viewBox="0 0 11 9">
              <path d="M0 1h11M0 4.5h11M0 8h11" stroke="#8c8c8c" strokeWidth="2" />
            </svg>
          </AreaIcon>
          Axis (Categori...
        </AreaHead>
        <AreaBox>
          <AreaItem>
            BUHierarchy
            <Caret />
          </AreaItem>
        </AreaBox>
      </AreaCell>
      <AreaCell>
        <AreaHead>
          <AreaIcon>
            <Letter $size={12} style={{ color: "#777" }}>Σ</Letter>
          </AreaIcon>
          Values
        </AreaHead>
        <AreaBox>
          <AreaItem>
            Gross Margin
            <Caret />
          </AreaItem>
        </AreaBox>
      </AreaCell>
    </Areas>
    <PanelFooter>
      <CheckBox />
      <DeferLabel>Defer Layout Update</DeferLabel>
      <UpdateButton>Update</UpdateButton>
    </PanelFooter>
  </Panel>
);

const Status = () => (
  <StatusBar>
    <ReadyText>Ready</ReadyText>
    <Slot $w={16}>
      <svg width="12" height="12" viewBox="0 0 12 12">
        <circle cx="3" cy="2" r="2" fill="#777" />
        <path d="M6 1h6M0 5h12v7H0z" fill="#bbb" stroke="#888" strokeWidth="0.7" />
        <path d="M3 7v4M6 7v4M9 7v4" stroke="#777" />
      </svg>
    </Slot>
    <NormalView>
      <svg width="13" height="12" viewBox="0 0 13 12">
        <path d="M0.5 0.5h12v11H0.5zM0.5 4h12M0.5 8h12M4.5 0.5v11M8.5 0.5v11" fill="none" stroke="#666" />
      </svg>
    </NormalView>
    <Slot $w={34}>
      <svg width="13" height="12" viewBox="0 0 13 12">
        <path d="M0.5 0.5h12v11H0.5z" fill="none" stroke="#777" />
        <path d="M4 3h5v6H4z" fill="none" stroke="#aaa" />
      </svg>
    </Slot>
    <Slot $w={32}>
      <svg width="13" height="12" viewBox="0 0 13 12">
        <path d="M0.5 0.5h12v11H0.5zM0.5 7.5h12M4.5 0.5v7M8.5 0.5v7" fill="none" stroke="#777" />
      </svg>
    </Slot>
    <ZoomSign $ml={5}>-</ZoomSign>
    <ZoomTrack>
      <ZoomThumb />
    </ZoomTrack>
    <ZoomSign>+</ZoomSign>
    <ZoomPct>100%</ZoomPct>
  </StatusBar>
);

const App = () => (
  <Window>
    <GlobalStyle />
    <Title />
    <Tabs />
    <RibbonBar />
    <Formula />
    <Main>
      <SheetPane>
        <GridRow>
          <Sheet />
          <VScroll>
            <ScrollBtn $h={14}>
              <UpArrow />
            </ScrollBtn>
            <VThumb />
            <ScrollBtn $h={11} style={{ marginTop: "auto" }}>
              <DownArrow />
            </ScrollBtn>
          </VScroll>
        </GridRow>
        <SheetFooter />
      </SheetPane>
      <FieldPanel />
    </Main>
    <Status />
  </Window>
);

export default App;
